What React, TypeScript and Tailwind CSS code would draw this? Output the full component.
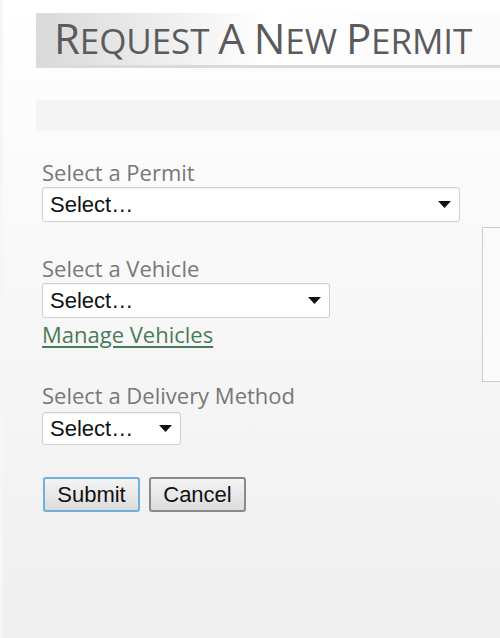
import React from "react";

const Arrow = () => (
  <svg width="13" height="7" viewBox="0 0 13 7" className="shrink-0">
    <path d="M0 0 H13 L6.5 7 Z" fill="#111" />
  </svg>
);

function FakeSelect({ w, h, extra = "" }: { w: string; h: string; extra?: string }) {
  return (
    <div
      className={`${w} ${h} ${extra} flex items-center justify-between bg-white border border-[#cfcfcf] rounded-[3px] pl-[7px] pr-[8px] shadow-[inset_0_1px_1px_rgba(0,0,0,0.06)]`}
    >
      <span className="text-[22px] leading-none text-[#111] font-['Liberation_Sans',Arial,sans-serif]">
        Select…
      </span>
      <Arrow />
    </div>
  );
}

function Cap({ big, rest }: { big: string; rest: string }) {
  return (
    <span>
      <span className="text-[42px]">{big}</span>
      {rest ? <span className="text-[35px]">{rest}</span> : null}
    </span>
  );
}

export default function App() {
  return (
    <div className="w-[500px] h-[638px] overflow-hidden bg-gradient-to-b from-white via-[#f7f7f7] to-[#efefef] border-l-[3px] border-[#f6f6f6] font-['Open_Sans',sans-serif]">
      <div className="pt-[13px] pl-[33px]">
        <div className="h-[55px] bg-gradient-to-r from-[#d9d9d9] via-white via-50% to-[#fafafa] border-b-[3px] border-[#dadada] flex items-center pl-[18px] pb-[2px]">
          <h1 className="text-[35px] text-[#5a5b5e] leading-none tracking-[-0.1px] whitespace-nowrap">
            <Cap big="R" rest="EQUEST" /> <Cap big="A" rest="" /> <Cap big="N" rest="EW" />{" "}
            <Cap big="P" rest="ERMIT" />
          </h1>
        </div>
        <div className="mt-[32px] h-[31px] bg-[#f4f4f4]" />
        <div className="flex mt-[26px]">
          <div className="w-[446px] pl-[6px] flex flex-col">
            <label className="text-[22px] leading-[30px] text-[#777]">Select a Permit</label>
            <FakeSelect w="w-[418px]" h="h-[35px]" />
            <label className="mt-[31px] text-[22px] leading-[30px] text-[#777]">Select a Vehicle</label>
            <FakeSelect w="w-[288px]" h="h-[35px]" />
            <a href="#" className="self-start text-[22px] leading-[33px] text-[#4b7a5a] underline underline-offset-[3px]">
              Manage Vehicles
            </a>
            <label className="mt-[29px] text-[22px] leading-[30px] text-[#777]">Select a Delivery Method</label>
            <FakeSelect w="w-[139px]" h="h-[33px]" extra="mt-[2px]" />
            <div className="mt-[32px] flex gap-[9px] font-['Liberation_Sans',Arial,sans-serif]">
              <button className="ml-[1px] w-[97px] h-[35px] rounded-[3px] border-2 border-[#6fb0dc] bg-gradient-to-b from-[#f4f4f4] to-[#dcdcdc] text-[22px] leading-none text-[#111]">
                Submit
              </button>
              <button className="w-[97px] h-[35px] rounded-[3px] border-2 border-[#8a8a8a] bg-gradient-to-b from-[#f4f4f4] to-[#dcdcdc] text-[22px] leading-none text-[#111]">
                Cancel
              </button>
            </div>
          </div>
          <div className="mt-[70px] h-[155px] flex-1 border border-r-0 border-[#cccccc] bg-[#fafafa]" />
        </div>
      </div>
    </div>
  );
}
